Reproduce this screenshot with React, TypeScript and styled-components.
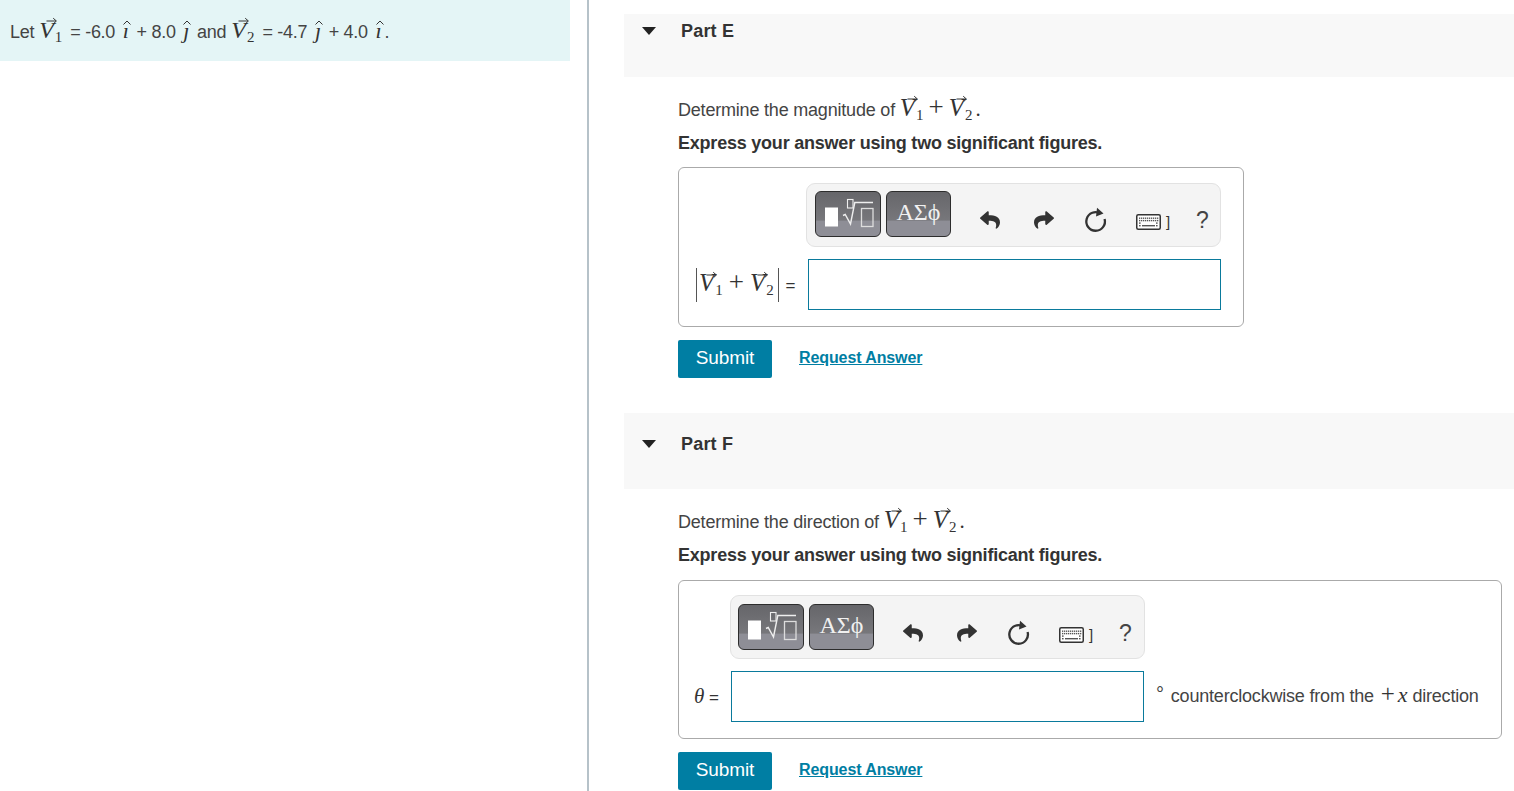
import React from "react";
import styled, { createGlobalStyle } from "styled-components";
import { FaReply, FaShare } from "react-icons/fa";

const Global = createGlobalStyle`
  html, body { margin: 0; padding: 0; background: #fff; }
  body { font-family: "Liberation Sans", Arial, sans-serif; color: #333; overflow: hidden; }
`;

const Page = styled.div`
  display: flex;
  width: 1514px;
  height: 791px;
  overflow: hidden;
`;
const LeftPane = styled.aside`
  width: 570px;
  flex: none;
`;
const InfoBox = styled.div`
  height: 61px;
  background: #e4f5f6;
  padding: 3px 0 0 10px;
  font-size: 18px;
  line-height: 58px;
  letter-spacing: -0.3px;
  color: #444;
  box-sizing: border-box;
  white-space: pre;
`;
const Divider = styled.div`
  width: 2px;
  flex: none;
  margin-left: 17px;
  background: #b6c2c9;
`;
const RightPane = styled.main`
  flex: 1;
  margin-left: 35px;
  padding-top: 14px;
`;
const PartHeader = styled.div<{ $h: number; $pad: number }>`
  height: ${(p) => p.$h}px;
  background: #f8f8f8;
  display: flex;
  align-items: flex-start;
  padding: ${(p) => p.$pad}px 0 0 18px;
  box-sizing: border-box;
`;
const Caret = styled.span`
  width: 0;
  height: 0;
  margin-top: 5px;
  border-left: 7.5px solid transparent;
  border-right: 7.5px solid transparent;
  border-top: 8px solid #222;
`;
const PartTitle = styled.h2`
  margin: 0 0 0 24px;
  font-size: 18px;
  line-height: 18px;
  font-weight: 700;
  color: #333;
  letter-spacing: 0.2px;
  padding-left: 1px;
`;
const PartGap = styled.div`
  height: 35px;
`;
const PartBody = styled.section<{ $top: number }>`
  padding: ${(p) => p.$top}px 12px 0 54px;
`;
const Prompt = styled.p`
  margin: 0;
  height: 24px;
  line-height: 28px;
  font-size: 18px;
  letter-spacing: -0.2px;
  color: #444;
  white-space: pre;
`;
const Instruction = styled.p`
  margin: 11px 0 0;
  height: 24px;
  line-height: 24px;
  font-size: 18px;
  font-weight: 700;
  letter-spacing: -0.22px;
  color: #333;
`;
const AnswerBox = styled.div<{ $w: number; $h: number; $top: number; $pad: number }>`
  width: ${(p) => p.$w}px;
  height: ${(p) => p.$h}px;
  margin-top: ${(p) => p.$top}px;
  border: 1px solid #aaa;
  border-radius: 6px;
  box-sizing: border-box;
  padding: ${(p) => p.$pad}px 0 0;
`;
const Toolbar = styled.div<{ $indent: number; $padTop: number; $padLeft: number }>`
  width: 415px;
  height: 64px;
  margin-left: ${(p) => p.$indent}px;
  background: #f4f4f4;
  border: 1px solid #e2e2e2;
  border-radius: 9px;
  box-sizing: border-box;
  display: flex;
  align-items: flex-start;
  padding: ${(p) => p.$padTop}px 0 0 ${(p) => p.$padLeft}px;
`;
const TemplateBtn = styled.div<{ $w: number }>`
  position: relative;
  width: ${(p) => p.$w}px;
  height: 46px;
  margin-right: 5px;
  flex: none;
  box-sizing: border-box;
  border: 1px solid #2d2d2d;
  border-radius: 6px;
  background: linear-gradient(#66666a 0, #77777b 64%, #8e8e96 66%, #8e8e96 100%);
  color: #f0f0f0;
  display: flex;
  align-items: center;
  justify-content: center;
  font-family: "Liberation Serif", serif;
  font-size: 24px;
  padding-bottom: 4px;
`;
const GlyphSvg = styled.svg`
  position: absolute;
  left: 0;
  top: 0;
  width: 64px;
  height: 44px;
`;
const ToolIcons = styled.div`
  display: flex;
  align-items: center;
  height: 58px;
  margin-left: 24px;
  color: #333;
`;
const ToolSlot = styled.span<{ $w: number; $drop?: number }>`
  width: ${(p) => p.$w}px;
  margin-top: ${(p) => p.$drop ?? 0}px;
  display: flex;
  align-items: center;
  justify-content: flex-start;
`;
const Help = styled.span`
  font-size: 23px;
  line-height: 24px;
  color: #444;
  margin-top: -1px;
`;
const Bracket = styled.span`
  font-size: 15px;
  margin-left: 5px;
  color: #333;
`;
const AnswerRow = styled.div`
  display: flex;
  align-items: flex-start;
  margin-top: 12px;
`;
const RowLabel = styled.div<{ $w: number; $pad: number }>`
  width: ${(p) => p.$w}px;
  padding-left: ${(p) => p.$pad}px;
  box-sizing: border-box;
  flex: none;
  height: 51px;
  line-height: 53px;
  font-size: 17px;
  color: #333;
  white-space: pre;
`;
const AnswerInput = styled.input`
  width: 413px;
  height: 51px;
  border: 1px solid #0a7a9c;
  box-sizing: border-box;
  background: #fff;
  flex: none;
  outline: none;
`;
const Units = styled.span`
  margin: 15px 0 0 12px;
  font-size: 18px;
  letter-spacing: -0.2px;
  color: #444;
  line-height: 20px;
  white-space: pre;
`;
const Degree = styled.span`
  font-size: 20px;
  line-height: 0;
  vertical-align: 1px;
  margin-right: 7px;
`;
const Actions = styled.div<{ $top: number }>`
  display: flex;
  align-items: center;
  margin-top: ${(p) => p.$top}px;
`;
const SubmitButton = styled.button`
  width: 94px;
  height: 38px;
  border: 0;
  border-radius: 2px;
  background: #007ea3;
  color: #fff;
  font-family: "Liberation Sans", Arial, sans-serif;
  font-size: 19px;
  letter-spacing: -0.1px;
  padding: 0 0 2px;
`;
const RequestLink = styled.a`
  margin: -2px 0 0 27px;
  color: #007ea3;
  font-size: 16px;
  font-weight: 700;
  text-decoration: underline;
  letter-spacing: -0.1px;
`;

const Serif = styled.span<{ $size?: number }>`
  font-family: "Liberation Serif", serif;
  font-size: ${(p) => p.$size ?? 21}px;
  letter-spacing: 0;
  line-height: 0;
  color: #333;
`;
const MathIt = styled(Serif)`
  font-style: italic;
`;
const Plus = styled(Serif)<{ $gap: number }>`
  margin: 0 ${(p) => p.$gap}px;
`;
const UnitPlus = styled(Serif)`
  margin: 0 3px 0 2px;
`;
const Sub = styled.span<{ $size?: number }>`
  font-family: "Liberation Serif", serif;
  font-size: ${(p) => p.$size ?? 15}px;
  vertical-align: -4px;
  line-height: 0;
  margin-left: 1px;
  letter-spacing: 0;
  color: #333;
`;
const Accent = styled.span`
  position: relative;
  display: inline-block;
  line-height: 1;
`;
const HatSlot = styled(Accent)`
  margin: 0 3px;
`;
const ArrowMark = styled.svg`
  position: absolute;
  left: 7px;
  top: -6px;
  width: 11px;
  height: 7px;
`;
const HatMark = styled.svg`
  position: absolute;
  left: 50%;
  top: -3px;
  width: 8px;
  height: 5px;
  margin-left: -3px;
`;
const Bar = styled.span<{ $left: number }>`
  display: inline-block;
  width: 1px;
  height: 34px;
  vertical-align: -11px;
  background: #555;
  margin: 0 2px 0 ${(p) => p.$left}px;
`;
const Line = styled.span`
  margin: 0 8px 0 5px;
`;
const Dot = styled(Serif)`
  margin-left: 3px;
`;

function Vec({ n, size = 25, subSize = 15 }: { n: string; size?: number; subSize?: number }) {
  return (
    <>
      <Accent>
        <MathIt $size={size}>V</MathIt>
        <ArrowMark viewBox="0 0 11 7">
          <path d="M0.5 4H10M7.2 1.2L10.4 4L7.8 6.4" fill="none" stroke="#333" strokeWidth="1" />
        </ArrowMark>
      </Accent>
      <Sub $size={subSize}>{n}</Sub>
    </>
  );
}

function Hat({ c }: { c: string }) {
  return (
    <HatSlot>
      <MathIt $size={22}>{c}</MathIt>
      <HatMark viewBox="0 0 8 5">
        <path d="M0.5 4.5L4 1L7.5 4.5" fill="none" stroke="#333" strokeWidth="1" />
      </HatMark>
    </HatSlot>
  );
}

function Sum({ gap = 5 }: { gap?: number }) {
  return (
    <>
      <Vec n="1" />
      <Plus $size={27} $gap={gap}>+</Plus>
      <Vec n="2" />
    </>
  );
}

function TemplateGlyph() {
  return (
    <GlyphSvg viewBox="0 0 64 44">
      <rect x="9" y="15.5" width="13" height="19" fill="#fff" />
      <rect x="31.5" y="7.5" width="5.5" height="8.5" fill="none" stroke="#eee" strokeWidth="1.1" />
      <path d="M27 23.5L29.2 22.5L34.5 32L38.8 10.5H57" fill="none" stroke="#eee" strokeWidth="1.4" />
      <rect x="45.5" y="16.5" width="11.5" height="18" fill="none" stroke="#ddd" strokeWidth="1.3" />
    </GlyphSvg>
  );
}

function ResetIcon() {
  return (
    <svg width="24" height="26" viewBox="0 0 24 26" fill="none">
      <path d="M16.6 6.6A9.3 9.3 0 1 0 20.6 12" stroke="#333" strokeWidth="2.3" fill="none" />
      <path d="M13 .8L19.5 6.4L12 9.4Z" fill="#333" />
    </svg>
  );
}

function KeyboardIcon() {
  const keys: React.ReactElement[] = [];
  for (let r = 0; r < 2; r++) {
    for (let c = 0; c < 10; c++) {
      keys.push(<rect key={`${r}-${c}`} x={3 + c * 2} y={3.5 + r * 2.4} width="1.3" height="1.4" fill="#555" />);
    }
  }
  return (
    <svg width="25" height="16" viewBox="0 0 25 16">
      <rect x=".75" y=".75" width="23.5" height="14.5" rx="1.5" fill="#fff" stroke="#333" strokeWidth="1.5" />
      {keys}
      <rect x="3" y="8.4" width="1.6" height="1.4" fill="#555" />
      <rect x="20" y="8.4" width="1.6" height="1.4" fill="#555" />
      <rect x="6" y="11" width="13" height="1.4" fill="#555" />
      <rect x="3" y="11" width="1.6" height="1.4" fill="#555" />
      <rect x="20" y="11" width="1.6" height="1.4" fill="#555" />
    </svg>
  );
}

function MathToolbar({ indent, padTop, padLeft }: { indent: number; padTop: number; padLeft: number }) {
  return (
    <Toolbar $indent={indent} $padTop={padTop} $padLeft={padLeft}>
      <TemplateBtn $w={66}>
        <TemplateGlyph />
      </TemplateBtn>
      <TemplateBtn $w={65}>ΑΣϕ</TemplateBtn>
      <ToolIcons>
        <ToolSlot $w={54}>
          <FaReply size={20} />
        </ToolSlot>
        <ToolSlot $w={50}>
          <FaShare size={20} />
        </ToolSlot>
        <ToolSlot $w={52}>
          <ResetIcon />
        </ToolSlot>
        <ToolSlot $w={60} $drop={3}>
          <KeyboardIcon />
          <Bracket>]</Bracket>
        </ToolSlot>
        <Help>?</Help>
      </ToolIcons>
    </Toolbar>
  );
}

export default function App() {
  return (
    <Page>
      <Global />
      <LeftPane>
        <InfoBox>
          Let<Line><Vec n="1" size={24} subSize={15} /></Line>= -6.0 <Hat c="ı" /> + 8.0 <Hat c="ȷ" /> and<Line><Vec n="2" size={24} subSize={15} /></Line>= -4.7 <Hat c="ȷ" /> + 4.0 <Hat c="ı" />.
        </InfoBox>
      </LeftPane>
      <Divider />
      <RightPane>
        <PartHeader $h={63} $pad={8}>
          <Caret />
          <PartTitle>Part E</PartTitle>
        </PartHeader>
        <PartBody $top={19}>
          <Prompt>
            Determine the magnitude of <Sum />
            <Dot>.</Dot>
          </Prompt>
          <Instruction>Express your answer using two significant figures.</Instruction>
          <AnswerBox $w={566} $h={160} $top={12} $pad={15}>
            <MathToolbar indent={127} padTop={7} padLeft={8} />
            <AnswerRow>
              <RowLabel $w={129} $pad={15}>
                <Bar $left={2} />
                <Sum gap={6} />
                <Bar $left={4} />
                {" ="}
              </RowLabel>
              <AnswerInput aria-label="magnitude" />
            </AnswerRow>
          </AnswerBox>
          <Actions $top={13}>
            <SubmitButton>Submit</SubmitButton>
            <RequestLink>Request Answer</RequestLink>
          </Actions>
        </PartBody>
        <PartGap />
        <PartHeader $h={76} $pad={22}>
          <Caret />
          <PartTitle>Part F</PartTitle>
        </PartHeader>
        <PartBody $top={19}>
          <Prompt>
            Determine the direction of <Sum />
            <Dot>.</Dot>
          </Prompt>
          <Instruction>Express your answer using two significant figures.</Instruction>
          <AnswerBox $w={824} $h={159} $top={13} $pad={14}>
            <MathToolbar indent={51} padTop={8} padLeft={7} />
            <AnswerRow>
              <RowLabel $w={52} $pad={15}>
                <MathIt $size={21}>θ</MathIt>
                {" ="}
              </RowLabel>
              <AnswerInput aria-label="direction" />
              <Units>
                <Degree>°</Degree>counterclockwise from the <UnitPlus $size={25}>+</UnitPlus>
                <MathIt $size={22}>x</MathIt> direction
              </Units>
            </AnswerRow>
          </AnswerBox>
          <Actions $top={13}>
            <SubmitButton>Submit</SubmitButton>
            <RequestLink>Request Answer</RequestLink>
          </Actions>
        </PartBody>
      </RightPane>
    </Page>
  );
}
